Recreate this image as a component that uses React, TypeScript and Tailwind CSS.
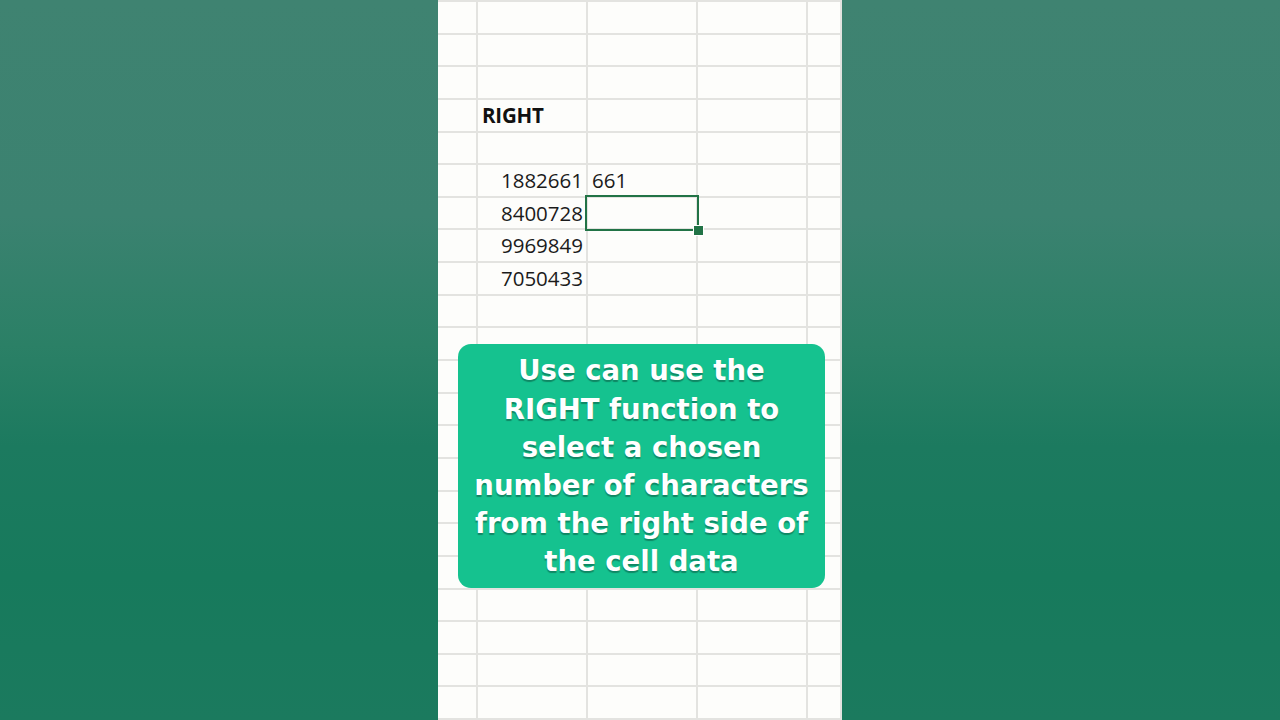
const colWidths = ["w-[40px]", "w-[110px]", "w-[110px]", "w-[110px]", "w-[34px]"];

type Row = { a?: string; b?: string; c?: string; bold?: boolean; selected?: boolean };

const rows: Row[] = [
  {},
  {},
  {},
  { a: "RIGHT", bold: true },
  {},
  { b: "1882661", c: "661" },
  { b: "8400728", selected: true },
  { b: "9969849" },
  { b: "7050433" },
  {}, {}, {}, {}, {}, {}, {}, {}, {}, {}, {}, {}, {}, {},
];

const Cell = ({ w, children, className = "" }: { w: string; children?: React.ReactNode; className?: string }) => (
  <div className={`${w} h-full shrink-0 border-r-2 border-[#e3e3e0] flex items-center ${className}`}>
    {children}
  </div>
);

const Sheet = () => (
  <div className="relative w-[404px] h-[720px] overflow-hidden bg-[#fdfdfb] font-['Open_Sans',sans-serif] text-[20.5px] text-[#1b1b1b]">
    {rows.map((r, i) => (
      <div key={i} className="flex h-[32.65px] border-t-2 border-[#e3e3e0]">
        <Cell w={colWidths[0]} />
        <Cell w={colWidths[1]} className={r.bold ? "pl-[4px]" : "justify-end pr-[3px]"}>
          {r.bold ? <span className="font-bold tracking-[-0.2px] text-[#111]">{r.a}</span> : r.b}
        </Cell>
        <Cell w={colWidths[2]} className="relative pl-[4px]">
          {r.c}
          {r.selected && (
            <div className="absolute z-10 left-[-3px] top-[-3px] w-[114px] h-[36px] border-[2.5px] border-[#217346]">
              <div className="absolute right-[-6px] bottom-[-6px] w-[9px] h-[9px] bg-[#217346] outline outline-1 outline-white" />
            </div>
          )}
        </Cell>
        <Cell w={colWidths[3]} />
        <Cell w={colWidths[4]} className="border-r-0" />
      </div>
    ))}

    <div className="absolute left-[20px] top-[344px] w-[367px] h-[244px] rounded-[13px] bg-[#15c28f] flex flex-col items-center justify-center">
      <p className="text-center text-white font-['DejaVu_Sans',sans-serif] font-bold text-[27.5px] leading-[38.2px] [text-shadow:0_1.5px_1px_rgba(0,0,0,0.3)]">
        Use can use the
        <br />
        RIGHT function to
        <br />
        select a chosen
        <br />
        number of characters
        <br />
        from the right side of
        <br />
        the cell data
      </p>
    </div>
  </div>
);

export default function App() {
  return (
    <div className="w-[1280px] h-[720px] flex justify-center bg-[linear-gradient(to_bottom,#3f8371_0%,#3b8270_30%,#2b8066_48%,#1c7a5f_62%,#177a5c_80%,#1b7a5e_100%)]">
      <Sheet />
    </div>
  );
}
